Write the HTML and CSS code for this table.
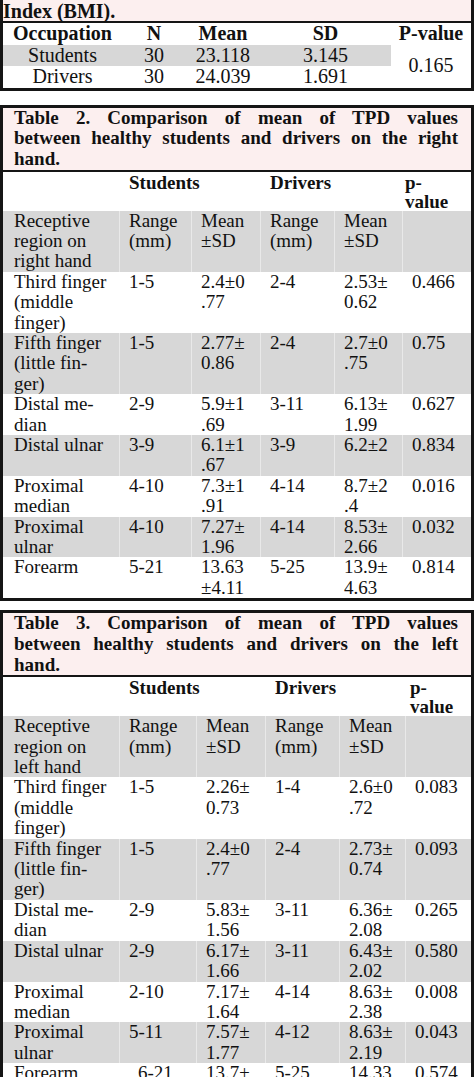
FILE: index.html
```html
<!DOCTYPE html>
<html lang="en">
<head>
<meta charset="utf-8">
<title>TPD tables</title>
<link rel="stylesheet" href="styles.css">
</head>
<body>
<div class="page">

  <div class="tbl tbl--cont">
    <div class="cap cap--bmi">Index (BMI).</div>
    <table class="bmi">
      <colgroup><col class="b1"><col class="b2"><col class="b3"><col class="b4"><col class="b5"></colgroup>
      <tr class="bh"><th>Occupation</th><th>N</th><th>Mean</th><th>SD</th><th>P-value</th></tr>
      <tr><td class="g">Students</td><td class="g">30</td><td class="g">23.118</td><td class="g">3.145</td><td rowspan="2" class="mid">0.165</td></tr>
      <tr><td>Drivers</td><td>30</td><td>24.039</td><td>1.691</td></tr>
    </table>
  </div>

  <div class="tbl tbl--t2">
    <div class="cap">
      <span class="cap-line">Table 2. Comparison of mean of TPD values</span>
      <span class="cap-line">between healthy students and drivers on the right</span>
      <span class="cap-end">hand.</span>
    </div>
    <table class="tpd tpd--right">
      <colgroup><col class="c1"><col class="c2"><col class="c3"><col class="c4"><col class="c5"><col class="c6"></colgroup>
      <tr class="hd"><th></th><th colspan="2">Students</th><th colspan="2">Drivers</th><th class="pv">p-<br>value</th></tr>
      <tr class="g"><td>Receptive<br>region on<br>right hand</td><td>Range<br>(mm)</td><td>Mean<br>±SD</td><td>Range<br>(mm)</td><td>Mean<br>±SD</td><td></td></tr>
      <tr><td>Third finger<br>(middle<br>finger)</td><td>1-5</td><td>2.4±0<br>.77</td><td>2-4</td><td>2.53±<br>0.62</td><td>0.466</td></tr>
      <tr class="g"><td>Fifth finger<br>(little fin-<br>ger)</td><td>1-5</td><td>2.77±<br>0.86</td><td>2-4</td><td>2.7±0<br>.75</td><td>0.75</td></tr>
      <tr><td>Distal me-<br>dian</td><td>2-9</td><td>5.9±1<br>.69</td><td>3-11</td><td>6.13±<br>1.99</td><td>0.627</td></tr>
      <tr class="g"><td>Distal ulnar</td><td>3-9</td><td>6.1±1<br>.67</td><td>3-9</td><td>6.2±2</td><td>0.834</td></tr>
      <tr><td>Proximal<br>median</td><td>4-10</td><td>7.3±1<br>.91</td><td>4-14</td><td>8.7±2<br>.4</td><td>0.016</td></tr>
      <tr class="g"><td>Proximal<br>ulnar</td><td>4-10</td><td>7.27±<br>1.96</td><td>4-14</td><td>8.53±<br>2.66</td><td>0.032</td></tr>
      <tr><td>Forearm</td><td>5-21</td><td>13.63<br>±4.11</td><td>5-25</td><td>13.9±<br>4.63</td><td>0.814</td></tr>
    </table>
  </div>

  <div class="tbl tbl--t3">
    <div class="cap">
      <span class="cap-line">Table 3. Comparison of mean of TPD values</span>
      <span class="cap-line">between healthy students and drivers on the left</span>
      <span class="cap-end">hand.</span>
    </div>
    <table class="tpd tpd--left">
      <colgroup><col class="c1"><col class="c2"><col class="c3"><col class="c4"><col class="c5"><col class="c6"></colgroup>
      <tr class="hd"><th></th><th colspan="2">Students</th><th colspan="2">Drivers</th><th class="pv">p-<br>value</th></tr>
      <tr class="g"><td>Receptive<br>region on<br>left hand</td><td>Range<br>(mm)</td><td>Mean<br>±SD</td><td>Range<br>(mm)</td><td>Mean<br>±SD</td><td></td></tr>
      <tr><td>Third finger<br>(middle<br>finger)</td><td>1-5</td><td>2.26±<br>0.73</td><td>1-4</td><td>2.6±0<br>.72</td><td>0.083</td></tr>
      <tr class="g"><td>Fifth finger<br>(little fin-<br>ger)</td><td>1-5</td><td>2.4±0<br>.77</td><td>2-4</td><td>2.73±<br>0.74</td><td>0.093</td></tr>
      <tr><td>Distal me-<br>dian</td><td>2-9</td><td>5.83±<br>1.56</td><td>3-11</td><td>6.36±<br>2.08</td><td>0.265</td></tr>
      <tr class="g"><td>Distal ulnar</td><td>2-9</td><td>6.17±<br>1.66</td><td>3-11</td><td>6.43±<br>2.02</td><td>0.580</td></tr>
      <tr><td>Proximal<br>median</td><td>2-10</td><td>7.17±<br>1.64</td><td>4-14</td><td>8.63±<br>2.38</td><td>0.008</td></tr>
      <tr class="g"><td>Proximal<br>ulnar</td><td>5-11</td><td>7.57±<br>1.77</td><td>4-12</td><td>8.63±<br>2.19</td><td>0.043</td></tr>
      <tr><td>Forearm</td><td class="ind">6-21</td><td>13.7±</td><td>5-25</td><td>14.33</td><td>0.574</td></tr>
    </table>
  </div>

</div>
</body>
</html>
```
FILE: styles.css
```css
html, body {
  margin: 0;
  padding: 0;
  background: #ffffff;
}

body {
  font-family: "Liberation Serif", "Times New Roman", serif;
  color: #111111;
}

.page {
  width: 474px;
}

.tbl {
  border: 3px solid #151515;
}

.tbl--cont {
  border-top: 0;
}

.tbl--t2 {
  margin-top: 14px;
}

.tbl--t3 {
  margin-top: 9px;
}

.cap {
  background: #fcefef;
  border-bottom: 2px solid #151515;
  font-weight: bold;
  font-size: 19px;
  line-height: 20.67px;
  height: 62px;
  padding: 0 13px 0 11px;
}

.cap-line {
  display: block;
  text-align: justify;
  text-align-last: justify;
}

.cap-end {
  display: block;
}

.cap--bmi {
  height: 20px;
  padding: 1px 0 0 0;
  font-size: 20px;
  line-height: 21px;
}

table {
  border-collapse: separate;
  border-spacing: 0;
  table-layout: fixed;
  width: 468px;
}

/* BMI table */
.bmi .b1 { width: 119px; }
.bmi .b2 { width: 64px; }
.bmi .b3 { width: 74px; }
.bmi .b4 { width: 131px; }
.bmi .b5 { width: 80px; }

.bmi th,
.bmi td {
  padding: 0;
  text-align: center;
  font-size: 20px;
  line-height: 21.5px;
  vertical-align: top;
  white-space: nowrap;
}

.bmi th {
  font-weight: bold;
}

.bmi td.mid {
  vertical-align: middle;
}

.g {
  background: #d7d7d7;
}

/* TPD tables */
.tpd .c1 { width: 116px; }

.tpd--right .c2 { width: 72px; }
.tpd--right .c3 { width: 69px; }
.tpd--right .c4 { width: 74px; }
.tpd--right .c5 { width: 68px; }
.tpd--right .c6 { width: 69px; }

.tpd--left .c2 { width: 77px; }
.tpd--left .c3 { width: 69px; }
.tpd--left .c4 { width: 74px; }
.tpd--left .c5 { width: 66px; }
.tpd--left .c6 { width: 66px; }

.tpd th,
.tpd td {
  padding: 0 0 0 10px;
  text-align: left;
  vertical-align: top;
  font-size: 19px;
  white-space: nowrap;
}

.tpd th:first-child,
.tpd td:first-child {
  padding-left: 11px;
}

.tpd td {
  line-height: 20.4px;
}

.tpd td + td {
  box-shadow: inset 1px 0 0 rgba(255, 255, 255, 0.45);
}

.tpd th {
  font-weight: bold;
  line-height: 19px;
  padding-top: 1px;
  padding-bottom: 0;
  height: 37px;
}

.tpd--right th.pv {
  padding-left: 3px;
}

.tpd--left th.pv {
  padding-left: 5px;
}

.tpd td.ind {
  padding-left: 19px;
}
```
